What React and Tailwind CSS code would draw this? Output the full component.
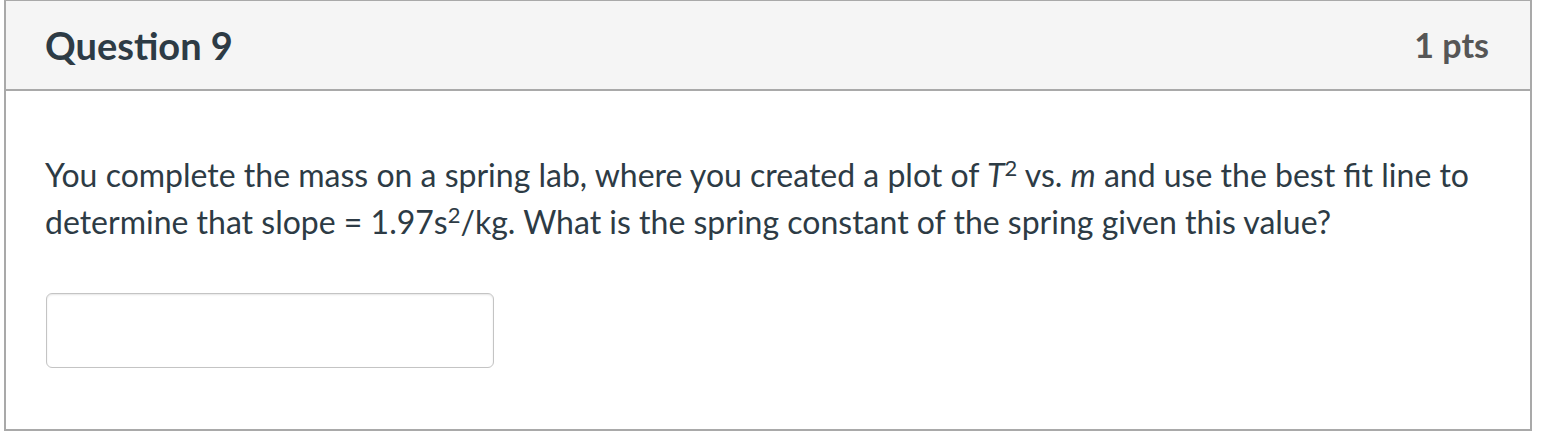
export default function App() {
  return (
    <div className="w-[1544px] h-[432px] bg-white" style={{ fontFamily: "Lato, 'Noto Sans', sans-serif" }}>
      <div className="ml-[4px] w-[1528px] h-[431px] border-2 border-t border-[#a9a9a9] flex flex-col">
        <div className="h-[90px] bg-[#f5f5f5] border-b-2 border-[#a9a9a9] flex items-center justify-between pl-[39px] pr-[41px]">
          <div className="text-[38px] font-bold text-[#2d3b45] leading-none">Question 9</div>
          <div className="text-[34px] font-bold text-[#565656] leading-none">1 pts</div>
        </div>
        <div className="pl-[39px] pr-[40px] pt-[60px]">
          <p className="text-[32px] leading-[47px] text-[#2d3b45]">
            You complete the mass on a spring lab, where you created a plot of <i>T</i>
            <sup className="text-[22px] leading-none">2</sup> vs. <i>m</i> and use the best fit line to determine that slope = 1.97s
            <sup className="text-[22px] leading-none">2</sup>/kg. What is the spring constant of the spring given this value?
          </p>
          <div className="mt-[48px] ml-px w-[448px] h-[75px] border border-[#c4c4c4] rounded-[6px] shadow-[inset_0_1px_2px_rgba(0,0,0,0.1)]" />
        </div>
      </div>
    </div>
  );
}
